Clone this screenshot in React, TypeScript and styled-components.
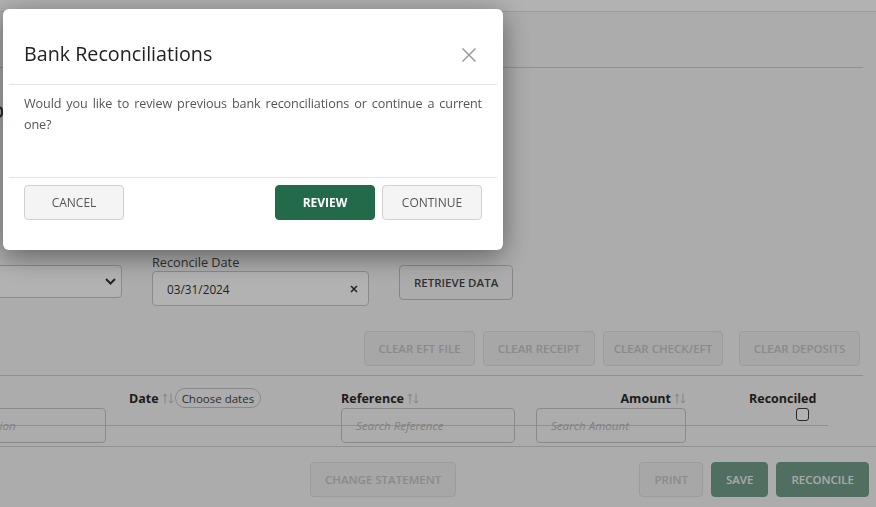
import React from 'react';
import styled, { createGlobalStyle, css } from 'styled-components';

const GlobalStyle = createGlobalStyle`
  html, body { margin: 0; padding: 0; }
  body {
    font-family: 'Open Sans', 'Liberation Sans', sans-serif;
    background: #f7f7f7;
    color: #333;
    overflow: hidden;
  }
  * { box-sizing: border-box; }
`;

const Page = styled.div`
  width: 996px;
  margin-left: -120px;
  height: 507px;
`;

const TopStrip = styled.div`
  height: 12px;
  background: #fff;
  border-bottom: 1px solid #e0e0e0;
`;

const Content = styled.div`
  padding: 0 13px 0 25px;
`;

const TitleBar = styled.div`
  height: 56px;
  border-bottom: 1px solid #d2d2d2;
`;

const SectionHeading = styled.h2`
  margin: 32px 0 0;
  width: 99px;
  overflow: hidden;
  direction: rtl;
  font-size: 16px;
  line-height: 24px;
  font-weight: 600;
  color: #333;
  white-space: nowrap;
`;

const FieldsRow = styled.div`
  margin-top: 129px;
  display: flex;
  align-items: flex-start;
  gap: 30px;
`;

const SelectBox = styled.div`
  margin-top: 12px;
  width: 217px;
  height: 33px;
  border: 1px solid #c6c6c6;
  border-radius: 4px;
  background: #fff;
  display: flex;
  align-items: center;
  justify-content: flex-end;
  padding-right: 5px;
`;

const Field = styled.div`
  display: flex;
  flex-direction: column;
`;

const FieldLabel = styled.label`
  font-size: 12.7px;
  line-height: 18px;
  color: #444;
`;

const DateBox = styled.div`
  width: 217px;
  height: 35px;
  border: 1px solid #c6c6c6;
  border-radius: 4px;
  background: #fff;
  display: flex;
  align-items: center;
  justify-content: space-between;
  padding: 0 10px 0 14px;
  font-size: 11.8px;
  color: #333;
`;

type Variant = 'outline' | 'muted' | 'primary' | 'primaryMuted' | 'light';

const Btn = styled.button<{ $variant: Variant; $width?: number; $push?: boolean }>`
  height: 35px;
  padding: 0 14px;
  border-radius: 4px;
  border: 1px solid transparent;
  font-family: 'Open Sans', 'Liberation Sans', sans-serif;
  font-size: 11.5px;
  font-weight: 600;
  white-space: nowrap;
  cursor: pointer;
  ${(p) => p.$width && css`width: ${p.$width}px; padding: 0;`}
  ${(p) => p.$push && css`margin-left: 8px;`}
  ${(p) =>
    p.$variant === 'outline' &&
    css`
      background: transparent;
      border-color: #c2c2c2;
      color: #464646;
    `}
  ${(p) =>
    p.$variant === 'muted' &&
    css`
      background: #efefef;
      border-color: #e0e0e0;
      color: #c6c6c6;
    `}
  ${(p) =>
    p.$variant === 'primary' &&
    css`
      background: #236a4b;
      border-color: #236a4b;
      color: #fff;
      font-weight: 700;
      font-size: 12px;
    `}
  ${(p) =>
    p.$variant === 'primaryMuted' &&
    css`
      background: #236a4b;
      border-color: #236a4b;
      color: #f2f2f2;
      opacity: 0.62;
    `}
  ${(p) =>
    p.$variant === 'light' &&
    css`
      background: #f4f4f4;
      border-color: #d0d0d0;
      color: #555;
      font-weight: 500;
      font-size: 12px;
    `}
`;

const RetrieveBtn = styled(Btn)`
  margin-top: 12px;
`;

const ClearRow = styled.div`
  margin-top: 25px;
  padding-right: 3px;
  display: flex;
  justify-content: flex-end;
  gap: 8px;
`;

const Divider = styled.div`
  margin-top: 9px;
  border-top: 1px solid #cfcfcf;
`;

const TableHead = styled.div`
  margin-right: 35px;
  height: 50px;
  border-bottom: 1px solid #cfcfcf;
  display: grid;
  grid-template-columns: 224px 212px 195px 184px 1fr;
`;

const HeadCell = styled.div`
  padding-top: 12px;
  display: flex;
  flex-direction: column;
  align-items: flex-start;
`;

const HeadLabel = styled.div<{ $end?: boolean }>`
  height: 20px;
  display: flex;
  align-items: center;
  gap: 3px;
  font-size: 12.5px;
  font-weight: 700;
  color: #2a2a2a;
  white-space: nowrap;
  ${(p) => p.$end && css`align-self: stretch; justify-content: flex-end;`}
`;

const AmountCol = styled.div`
  width: 150px;
  display: flex;
  flex-direction: column;
`;

const Pill = styled.span`
  margin-left: -2px;
  height: 20px;
  padding: 0 6px;
  border: 1px solid #c4c4c4;
  border-radius: 10px;
  display: inline-flex;
  align-items: center;
  font-size: 11.5px;
  font-weight: 500;
  color: #444;
`;

const FilterInput = styled.input<{ $w: number }>`
  width: ${(p) => p.$w}px;
  height: 35px;
  border: 1px solid #c6c6c6;
  border-radius: 4px;
  background: transparent;
  padding: 0 14px;
  font-family: 'Open Sans', 'Liberation Sans', sans-serif;
  font-size: 11.6px;
  font-style: italic;
  &::placeholder { color: #b8b8b8; }
`;

const ReconciledCell = styled.div`
  padding: 12px 0 0 29px;
  display: flex;
  flex-direction: column;
`;

const CheckBox = styled.span`
  margin: 0 0 0 47px;
  width: 13px;
  height: 13px;
  border: 1px solid #3a3a3a;
  border-radius: 3px;
  background: #fff;
`;

const Footer = styled.div`
  margin-top: 20px;
  border-top: 1px solid #d2d2d2;
  padding: 15px 7px 0 430px;
  display: flex;
  align-items: center;
  gap: 8px;
`;

const Spacer = styled.div`
  flex: 1;
`;

/* ---------- Modal ---------- */

const Backdrop = styled.div`
  position: fixed;
  inset: 0;
  background: rgba(0, 0, 0, 0.3);
  z-index: 10;
`;

const Dialog = styled.div`
  position: fixed;
  top: 9px;
  left: 3px;
  width: 500px;
  height: 241px;
  background: #fff;
  border-radius: 6px;
  box-shadow: 0 6px 28px rgba(0, 0, 0, 0.45);
  z-index: 11;
  display: flex;
  flex-direction: column;
`;

const DialogHeader = styled.div`
  margin: 0 6px;
  padding: 30px 15px 15px;
  border-bottom: 1px solid #e3e3e3;
  display: flex;
  align-items: center;
  justify-content: space-between;
`;

const DialogTitle = styled.h1`
  margin: 0;
  font-size: 19.7px;
  line-height: 30px;
  font-weight: 400;
  color: #222;
`;

const CloseBtn = styled.button`
  border: 0;
  background: none;
  padding: 0;
  margin: 2px 6px 0 0;
  width: 14px;
  height: 14px;
  display: flex;
  cursor: pointer;
`;

const DialogBody = styled.p`
  margin: 0;
  height: 92px;
  padding: 8px 21px 0;
  font-size: 12.6px;
  line-height: 21px;
  letter-spacing: -0.1px;
  color: #555;
  text-align: justify;
`;

const DialogFooter = styled.div`
  margin: 0 6px;
  padding: 7px 15px 0;
  border-top: 1px solid #e3e3e3;
  display: flex;
  align-items: center;
  justify-content: space-between;
`;

const BtnGroup = styled.div`
  display: flex;
  gap: 7px;
`;

const SortIcon = () => (
  <svg width="12" height="11" viewBox="0 0 12 11" fill="none" stroke="#b4b4b4" strokeWidth="0.9">
    <path d="M3 10.5V1M1 3.2L3 1l2 2.2" />
    <path d="M9 0.5V10M7 7.8L9 10l2-2.2" />
  </svg>
);

export default function App() {
  return (
    <>
      <GlobalStyle />
      <Page>
        <TopStrip />
        <Content>
          <TitleBar />
          <SectionHeading>Account O</SectionHeading>
          <FieldsRow>
            <SelectBox>
              <svg width="11" height="7" viewBox="0 0 11 7" fill="none" stroke="#333" strokeWidth="2">
                <path d="M1 1l4.5 4.5L10 1" />
              </svg>
            </SelectBox>
            <Field>
              <FieldLabel>Reconcile Date</FieldLabel>
              <DateBox>
                <span>03/31/2024</span>
                <svg width="8" height="8" viewBox="0 0 8 8" stroke="#333" strokeWidth="1.6">
                  <path d="M1 1l6 6M7 1L1 7" />
                </svg>
              </DateBox>
            </Field>
            <RetrieveBtn $variant="outline">RETRIEVE DATA</RetrieveBtn>
          </FieldsRow>
          <ClearRow>
            <Btn $variant="muted" $width={111}>CLEAR EFT FILE</Btn>
            <Btn $variant="muted" $width={112}>CLEAR RECEIPT</Btn>
            <Btn $variant="muted" $width={120}>CLEAR CHECK/EFT</Btn>
            <Btn $variant="muted" $width={121} $push>CLEAR DEPOSITS</Btn>
          </ClearRow>
          <Divider />
          <TableHead>
            <HeadCell>
              <HeadLabel>
                Description <SortIcon />
              </HeadLabel>
              <FilterInput $w={201} placeholder="Search Description" />
            </HeadCell>
            <HeadCell>
              <HeadLabel>
                Date <SortIcon />
                <Pill>Choose dates</Pill>
              </HeadLabel>
            </HeadCell>
            <HeadCell>
              <HeadLabel>
                Reference <SortIcon />
              </HeadLabel>
              <FilterInput $w={174} placeholder="Search Reference" />
            </HeadCell>
            <HeadCell>
              <AmountCol>
                <HeadLabel $end>
                  Amount <SortIcon />
                </HeadLabel>
                <FilterInput $w={150} placeholder="Search Amount" />
              </AmountCol>
            </HeadCell>
            <ReconciledCell>
              <HeadLabel>Reconciled</HeadLabel>
              <CheckBox />
            </ReconciledCell>
          </TableHead>
        </Content>
        <Footer>
          <Btn $variant="muted">CHANGE STATEMENT</Btn>
          <Spacer />
          <Btn $variant="muted">PRINT</Btn>
          <Btn $variant="primaryMuted">SAVE</Btn>
          <Btn $variant="primaryMuted">RECONCILE</Btn>
        </Footer>
      </Page>
      <Backdrop />
      <Dialog role="dialog" aria-label="Bank Reconciliations">
        <DialogHeader>
          <DialogTitle>Bank Reconciliations</DialogTitle>
          <CloseBtn aria-label="Close">
            <svg width="14" height="14" viewBox="0 0 14 14" stroke="#9a9a9a" strokeWidth="1.5">
              <path d="M0.5 0.5l13 13M13.5 0.5l-13 13" />
            </svg>
          </CloseBtn>
        </DialogHeader>
        <DialogBody>
          Would you like to review previous bank reconciliations or continue a current one?
        </DialogBody>
        <DialogFooter>
          <Btn $variant="light" $width={100}>CANCEL</Btn>
          <BtnGroup>
            <Btn $variant="primary" $width={100}>REVIEW</Btn>
            <Btn $variant="light" $width={100}>CONTINUE</Btn>
          </BtnGroup>
        </DialogFooter>
      </Dialog>
    </>
  );
}
